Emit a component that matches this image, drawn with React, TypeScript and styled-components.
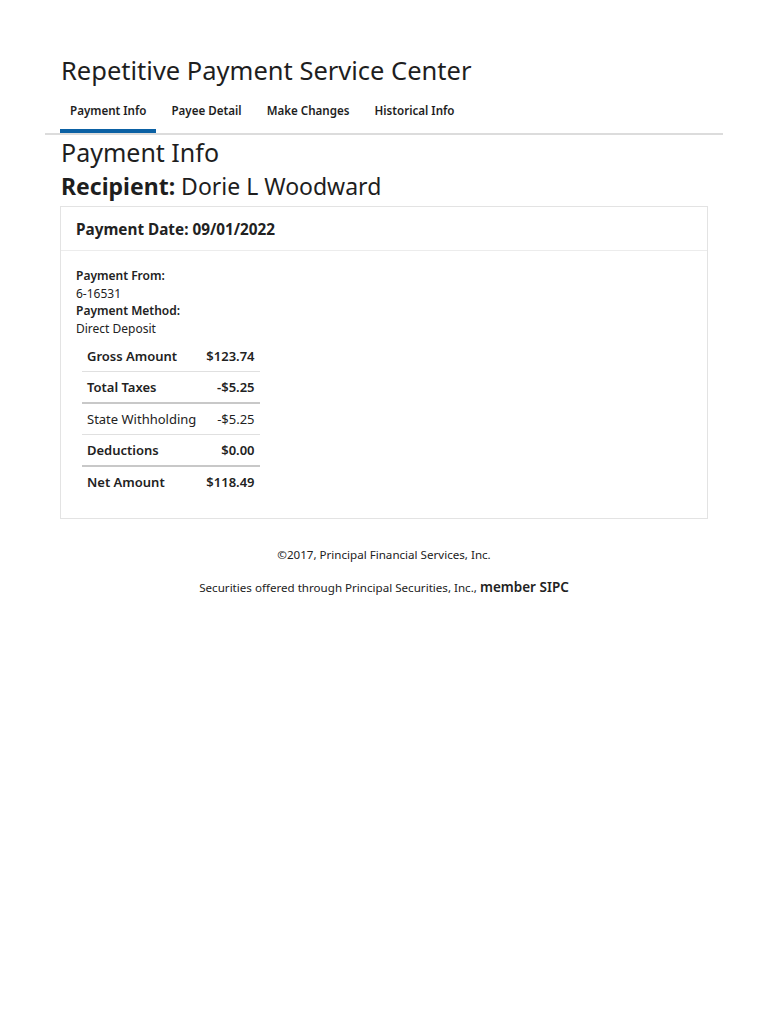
import React from "react";
import styled, { createGlobalStyle } from "styled-components";

const Global = createGlobalStyle`
  html, body { margin: 0; padding: 0; background: #fff; }
  body {
    font-family: "Noto Sans", "Open Sans", Arial, sans-serif;
    color: #222;
  }
  * { box-sizing: border-box; }
`;

const Page = styled.div`
  max-width: 678px;
  margin: 0 auto;
  padding-top: 53px;
`;

const Title = styled.h1`
  margin: 0;
  padding-left: 16px;
  font-size: 25.5px;
  line-height: 34px;
  font-weight: 400;
  color: #1e1e1e;
`;

const TabList = styled.nav`
  display: flex;
  gap: 5px;
  padding: 0 15px;
  margin-top: 4px;
  border-bottom: 2px solid #dcdcdc;
`;

const Tab = styled.div<{ $active?: boolean }>`
  padding: 11px 10px 10px;
  font-size: 11.6px;
  line-height: 17px;
  font-weight: 600;
  color: #1e1e1e;
  border-bottom: 4px solid ${(p) => (p.$active ? "#0b61a4" : "transparent")};
`;

const Content = styled.div`
  padding: 2px 15px 0;
`;

const SectionTitle = styled.h2`
  margin: 0;
  padding-left: 1px;
  font-size: 25px;
  line-height: 30px;
  font-weight: 400;
  color: #1e1e1e;
`;

const Recipient = styled.h3`
  margin: 4px 0 0;
  padding-left: 1px;
  font-size: 23px;
  line-height: 30px;
  font-weight: 400;
  color: #1e1e1e;
  b { font-weight: 700; }
`;

const Card = styled.section`
  margin-top: 5px;
  border: 1px solid #e3e3e3;
`;

const CardHeader = styled.div`
  padding: 12px 15px 11px;
  font-size: 15.3px;
  line-height: 20px;
  font-weight: 700;
  border-bottom: 1px solid #ececec;
`;

const CardBody = styled.div`
  padding: 16px 15px 21px;
`;

const Label = styled.div`
  font-size: 12px;
  line-height: 17.5px;
  font-weight: 600;
`;

const Value = styled.div`
  font-size: 12px;
  line-height: 17.5px;
`;

const Table = styled.table`
  margin: 4px 0 0 6px;
  border-collapse: collapse;
  width: 176px;
`;

const Row = styled.tr<{ $thick?: boolean; $first?: boolean }>`
  border-top: ${(p) =>
    p.$first ? "none" : p.$thick ? "2px solid #c8c8c8" : "1px solid #e0e0e0"};
`;

const Cell = styled.td<{ $bold?: boolean; $right?: boolean }>`
  padding: 5px;
  font-size: 13px;
  line-height: 20px;
  font-weight: ${(p) => (p.$bold ? 600 : 400)};
  text-align: ${(p) => (p.$right ? "right" : "left")};
  white-space: nowrap;
`;

const Footer = styled.footer`
  text-align: center;
  padding-top: 27px;
`;

const FootLine = styled.p`
  margin: 0 0 14px;
  font-size: 11.6px;
  line-height: 18px;
  b { font-size: 13.5px; font-weight: 600; }
`;

type Line = { label: string; amount: string; bold: boolean; thick?: boolean };

const lines: Line[] = [
  { label: "Gross Amount", amount: "$123.74", bold: true },
  { label: "Total Taxes", amount: "-$5.25", bold: true },
  { label: "State Withholding", amount: "-$5.25", bold: false, thick: true },
  { label: "Deductions", amount: "$0.00", bold: true },
  { label: "Net Amount", amount: "$118.49", bold: true, thick: true },
];

const tabs = ["Payment Info", "Payee Detail", "Make Changes", "Historical Info"];

export default function App() {
  return (
    <>
      <Global />
      <Page>
        <Title>Repetitive Payment Service Center</Title>
        <TabList>
          {tabs.map((t, i) => (
            <Tab key={t} $active={i === 0}>
              {t}
            </Tab>
          ))}
        </TabList>
        <Content>
          <SectionTitle>Payment Info</SectionTitle>
          <Recipient>
            <b>Recipient:</b> Dorie L Woodward
          </Recipient>
          <Card>
            <CardHeader>Payment Date: 09/01/2022</CardHeader>
            <CardBody>
              <Label>Payment From:</Label>
              <Value>6-16531</Value>
              <Label>Payment Method:</Label>
              <Value>Direct Deposit</Value>
              <Table>
                <tbody>
                  {lines.map((l, i) => (
                    <Row key={l.label} $first={i === 0} $thick={l.thick}>
                      <Cell $bold={l.bold}>{l.label}</Cell>
                      <Cell $bold={l.bold} $right>
                        {l.amount}
                      </Cell>
                    </Row>
                  ))}
                </tbody>
              </Table>
            </CardBody>
          </Card>
        </Content>
        <Footer>
          <FootLine>©2017, Principal Financial Services, Inc.</FootLine>
          <FootLine>
            Securities offered through Principal Securities, Inc., <b>member SIPC</b>
          </FootLine>
        </Footer>
      </Page>
    </>
  );
}
